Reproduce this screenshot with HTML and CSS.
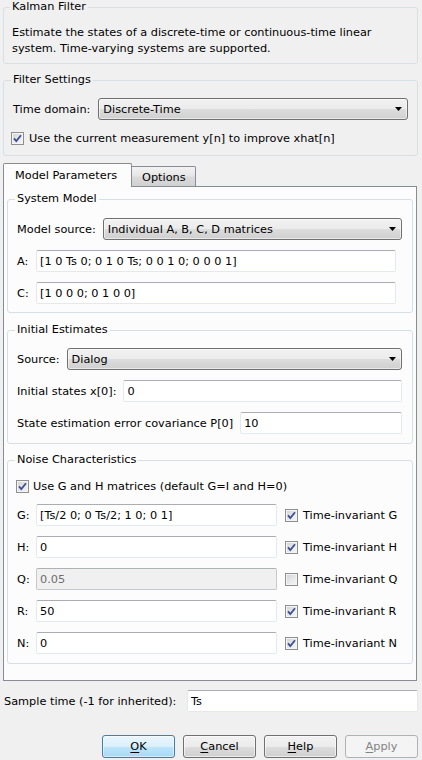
FILE: index.html
```html
<!DOCTYPE html>
<html>
<head>
<meta charset="utf-8">
<title>Kalman Filter</title>
<link rel="stylesheet" href="styles.css">
</head>
<body>
<div class="dialog">
  <section class="group g-kalman">
    <div class="gtitle">Kalman Filter</div>
    <p class="desc">Estimate the states of a discrete-time or continuous-time linear<br>system. Time-varying systems are supported.</p>
  </section>

  <section class="group g-filter">
    <div class="gtitle">Filter Settings</div>
    <div class="row gap9">
      <span class="lbl">Time domain:</span>
      <div class="select"><span class="sel-text">Discrete-Time</span><svg class="arrow" width="7" height="4" viewBox="0 0 7 4"><path d="M0 0H7L3.5 4Z" fill="#000"/></svg></div>
    </div>
    <div class="check-row cr-filter">
      <span class="cb"><svg width="11" height="11" viewBox="0 0 11 11"><path d="M2 5.3 4.3 8 9 2.2" fill="none" stroke="#3d4f8c" stroke-width="1.8"/></svg></span>
      <span>Use the current measurement y[n] to improve xhat[n]</span>
    </div>
  </section>

  <div class="tabs">
    <div class="tab tab-active">Model Parameters</div>
    <div class="tab tab-options">Options</div>
  </div>

  <div class="panel">
    <section class="group g-sys">
      <div class="gtitle">System Model</div>
      <div class="row">
        <span class="lbl">Model source:</span>
        <div class="select"><span class="sel-text">Individual A, B, C, D matrices</span><svg class="arrow" width="7" height="4" viewBox="0 0 7 4"><path d="M0 0H7L3.5 4Z" fill="#000"/></svg></div>
      </div>
      <div class="row short-right">
        <span class="lbl lbl-short">A:</span>
        <input class="input" type="text" value="[1 0 Ts 0; 0 1 0 Ts; 0 0 1 0; 0 0 0 1]">
      </div>
      <div class="row short-right">
        <span class="lbl lbl-short">C:</span>
        <input class="input" type="text" value="[1 0 0 0; 0 1 0 0]">
      </div>
    </section>

    <section class="group g-init">
      <div class="gtitle">Initial Estimates</div>
      <div class="row">
        <span class="lbl">Source:</span>
        <div class="select"><span class="sel-text">Dialog</span><svg class="arrow" width="7" height="4" viewBox="0 0 7 4"><path d="M0 0H7L3.5 4Z" fill="#000"/></svg></div>
      </div>
      <div class="row">
        <span class="lbl">Initial states x[0]:</span>
        <input class="input" type="text" value="0">
      </div>
      <div class="row">
        <span class="lbl">State estimation error covariance P[0]</span>
        <input class="input" type="text" value="10">
      </div>
    </section>

    <section class="group g-noise">
      <div class="gtitle">Noise Characteristics</div>
      <div class="check-row cr-noise">
        <span class="cb"><svg width="11" height="11" viewBox="0 0 11 11"><path d="M2 5.3 4.3 8 9 2.2" fill="none" stroke="#3d4f8c" stroke-width="1.8"/></svg></span>
        <span>Use G and H matrices (default G=I and H=0)</span>
      </div>
      <div class="row nrow">
        <span class="lbl lbl-short">G:</span>
        <input class="input" type="text" value="[Ts/2 0; 0 Ts/2; 1 0; 0 1]">
        <span class="tiv"><span class="cb"><svg width="11" height="11" viewBox="0 0 11 11"><path d="M2 5.3 4.3 8 9 2.2" fill="none" stroke="#3d4f8c" stroke-width="1.8"/></svg></span><span>Time-invariant G</span></span>
      </div>
      <div class="row nrow">
        <span class="lbl lbl-short">H:</span>
        <input class="input" type="text" value="0">
        <span class="tiv"><span class="cb"><svg width="11" height="11" viewBox="0 0 11 11"><path d="M2 5.3 4.3 8 9 2.2" fill="none" stroke="#3d4f8c" stroke-width="1.8"/></svg></span><span>Time-invariant H</span></span>
      </div>
      <div class="row nrow">
        <span class="lbl lbl-short">Q:</span>
        <input class="input input-disabled" type="text" value="0.05" disabled>
        <span class="tiv"><span class="cb"></span><span>Time-invariant Q</span></span>
      </div>
      <div class="row nrow">
        <span class="lbl lbl-short">R:</span>
        <input class="input" type="text" value="50">
        <span class="tiv"><span class="cb"><svg width="11" height="11" viewBox="0 0 11 11"><path d="M2 5.3 4.3 8 9 2.2" fill="none" stroke="#3d4f8c" stroke-width="1.8"/></svg></span><span>Time-invariant R</span></span>
      </div>
      <div class="row nrow">
        <span class="lbl lbl-short">N:</span>
        <input class="input" type="text" value="0">
        <span class="tiv"><span class="cb"><svg width="11" height="11" viewBox="0 0 11 11"><path d="M2 5.3 4.3 8 9 2.2" fill="none" stroke="#3d4f8c" stroke-width="1.8"/></svg></span><span>Time-invariant N</span></span>
      </div>
    </section>
  </div>

  <div class="sample-row">
    <span class="lbl">Sample time (-1 for inherited):</span>
    <input class="input sample-input" type="text" value="Ts">
  </div>

  <div class="buttons">
    <button class="btn btn-default" type="button"><u>O</u>K</button>
    <button class="btn" type="button"><u>C</u>ancel</button>
    <button class="btn" type="button"><u>H</u>elp</button>
    <button class="btn btn-disabled" type="button"><u>A</u>pply</button>
  </div>
</div>
</body>
</html>
```
FILE: styles.css
```css
* {
  box-sizing: border-box;
}

html, body {
  margin: 0;
  padding: 0;
}

body {
  width: 422px;
  height: 760px;
  overflow: hidden;
  background: #f0f0f0;
  font-family: "DejaVu Sans", sans-serif;
  font-size: 11.3px;
  color: #000;
}

.dialog {
  padding: 0 4px 0 3px;
  overflow: hidden;
}

/* group boxes */
.group {
  border: 1px solid #d5dfe5;
  border-radius: 3px;
}

.gtitle {
  display: table;
  margin: -8px 0 0 -2px;
  padding: 0 2px;
  line-height: 14px;
  white-space: nowrap;
  background: #f0f0f0;
}

.panel .gtitle {
  background: #fcfcfc;
}

.g-kalman {
  margin-top: 7px;
  padding: 0 9px 6px 8px;
}

.desc {
  margin: 11px 0 0 0;
  line-height: 16px;
  white-space: nowrap;
}

.g-filter {
  margin-top: 16px;
  padding: 0 9px 9px 9px;
}

.g-filter .gtitle + .row {
  margin-top: 11px;
}

.g-sys {
  margin-top: 11px;
  padding: 0 10px 8px 9px;
}

.g-sys .gtitle + .row {
  margin-top: 12px;
}

.g-init {
  margin-top: 17px;
  padding: 0 10px 9px 9px;
}

.g-init .gtitle + .row {
  margin-top: 11px;
}

.g-noise {
  margin-top: 16px;
  padding: 0 10px 9px 9px;
}

.g-noise .gtitle + .check-row {
  margin-top: 11px;
}

/* rows */
.row {
  display: flex;
  align-items: center;
  height: 22px;
  gap: 7px;
}

.row + .row,
.check-row + .row {
  margin-top: 10px;
}

.row.gap9 {
  gap: 8px;
}

.short-right {
  margin-right: 6px;
}

.lbl {
  white-space: nowrap;
  flex: none;
}

.lbl-short {
  width: 12px;
}

/* select */
.select {
  flex: 1;
  min-width: 0;
  height: 22px;
  display: flex;
  align-items: center;
  padding-left: 4px;
  border: 1px solid #707070;
  border-radius: 3px;
  background: linear-gradient(#f2f2f2 0%, #ebebeb 50%, #dddddd 50%, #cfcfcf 100%);
  box-shadow: inset 0 0 0 1px rgba(255, 255, 255, 0.55);
}

.sel-text {
  flex: 1;
  white-space: nowrap;
}

.arrow {
  flex: none;
  margin-right: 5px;
}

/* text fields */
.input {
  flex: 1;
  min-width: 0;
  height: 22px;
  margin: 0;
  padding: 0 3px;
  font: inherit;
  color: #000;
  background: #fff;
  border: 1px solid #e3e9ef;
  border-top-color: #abadb3;
  border-radius: 2px;
  outline: none;
}

.input-disabled {
  background: #f0f0f0;
  color: #6d6d6d;
  border-color: #c5c9cc;
  border-top-color: #adb2b5;
}

/* checkboxes */
.check-row {
  display: flex;
  align-items: center;
  height: 16px;
  white-space: nowrap;
}

.cr-filter {
  margin-top: 10px;
  margin-left: -2px;
  gap: 5px;
}

.cr-noise {
  margin-left: -1px;
  gap: 4px;
}

.cb {
  flex: none;
  width: 13px;
  height: 13px;
  display: inline-flex;
  align-items: center;
  justify-content: center;
  border: 1px solid #8e8f8f;
  background: linear-gradient(135deg, #cdd0d5 0%, #e6e7e9 50%, #f7f7f7 100%);
  box-shadow: inset 0 0 0 1px #f4f4f4;
}

.tiv {
  flex: none;
  width: 117px;
  margin-left: 1px;
  display: flex;
  align-items: center;
  gap: 5px;
  white-space: nowrap;
}

/* tabs */
.tabs {
  display: flex;
  align-items: flex-end;
  height: 23px;
  margin-top: 7px;
}

.tab {
  display: flex;
  align-items: center;
  white-space: nowrap;
  border: 1px solid #898c95;
  border-bottom: none;
}

.tab-active {
  position: relative;
  z-index: 1;
  width: 129px;
  height: 24px;
  margin-bottom: -1px;
  padding-left: 11px;
  background: #fcfcfc;
  border-radius: 2px 2px 0 0;
}

.tab-options {
  width: 64px;
  height: 20px;
  padding: 1px 0 0 10px;
  border-left: none;
  border-radius: 0 2px 0 0;
  background: linear-gradient(#f3f3f3 0%, #e6e6e6 45%, #dadada 55%, #d1d1d1 100%);
}

.panel {
  margin-right: 1px;
  padding: 1px 3px 16px 3px;
  border: 1px solid #898c95;
  background: #fcfcfc;
}

/* sample time */
.sample-row {
  display: flex;
  align-items: center;
  height: 22px;
  margin-top: 9px;
  padding-left: 1px;
}

.sample-row .lbl {
  flex: 1;
}

.sample-input {
  flex: 0 0 231px;
}

/* buttons */
.buttons {
  display: flex;
  justify-content: flex-end;
  gap: 8px;
  margin-top: 23px;
}

.btn {
  width: 73px;
  height: 23px;
  margin: 0;
  padding: 0;
  display: flex;
  align-items: center;
  justify-content: center;
  font: inherit;
  color: #000;
  border: 1px solid #707070;
  border-radius: 3px;
  background: linear-gradient(#f2f2f2 0%, #ebebeb 50%, #dddddd 50%, #cfcfcf 100%);
  box-shadow: inset 0 0 0 1px rgba(255, 255, 255, 0.6);
}

.btn u {
  text-decoration-thickness: 1px;
  text-underline-offset: 2px;
}

.btn-default {
  border-color: #3c7fb1;
  background: linear-gradient(#eaf6fd 0%, #d9f0fc 50%, #bee6fd 50%, #a7d9f5 100%);
  box-shadow: inset 0 0 0 1px rgba(255, 255, 255, 0.5);
}

.btn-disabled {
  color: #838383;
  border-color: #adb2b5;
  background: #f4f4f4;
  box-shadow: none;
}
```
